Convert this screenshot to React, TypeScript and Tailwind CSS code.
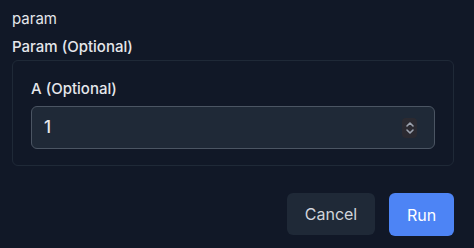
import React from "react";

const App: React.FC = () => {
  return (
    <div className="min-h-[248px] w-full bg-[#111827] pl-3 pr-5 pt-[10px] font-['Inter',sans-serif] text-[#e5e7eb]">
      <div className="text-[15px] leading-[18px]">param</div>
      <div className="mt-[10px] text-[15px] font-medium leading-[18px]">Param (Optional)</div>

      <div className="mt-[4px] rounded-md border border-[#1f2937] px-[18px] pt-[18px] pb-[16px]">
        <label className="block text-[15px] font-medium leading-[20px] text-[#e5e7eb]">A (Optional)</label>
        <div className="mt-[7px] flex h-[43px] items-center rounded-md border border-[#4b5563] bg-[#1f2937] pl-[12px] pr-[17px]">
          <span className="flex-1 text-[17px] font-medium text-[#e5e7eb]">1</span>
          <span className="flex h-[20px] w-[15px] items-center justify-center rounded-sm bg-[#2b2a31]">
            <svg width="10" height="14" viewBox="0 0 10 14" fill="none" stroke="#9ca3af" strokeWidth="1.6" strokeLinecap="round" strokeLinejoin="round">
              <path d="M2 5 L5 2 L8 5" />
              <path d="M2 9 L5 12 L8 9" />
            </svg>
          </span>
        </div>
      </div>

      <div className="mt-[27px] flex justify-end gap-[14px]">
        <button className="h-[42px] w-[88px] rounded-md bg-[#1f2937] text-base text-[#d1d5db]">Cancel</button>
        <button className="h-[43px] w-[65px] rounded-md bg-[#4d84f5] text-base text-white">Run</button>
      </div>
    </div>
  );
};

export default App;
